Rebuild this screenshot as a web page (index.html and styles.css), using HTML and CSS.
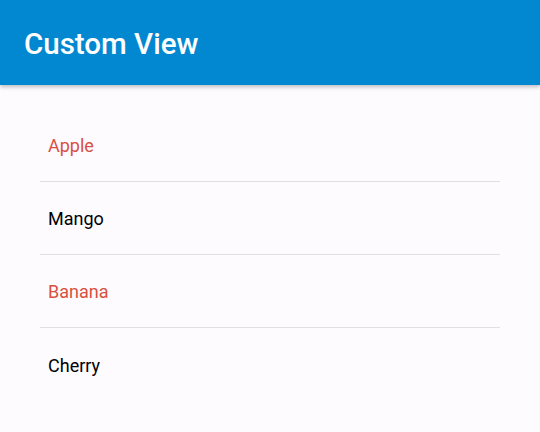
FILE: index.html
```html
<!DOCTYPE html>
<html>
<head>
<meta charset="utf-8">
<link rel="stylesheet" href="styles.css">
</head>
<body>
<header class="appbar"><h1 class="title">Custom View</h1></header>
<main class="content">
  <ul class="list">
    <li class="item red">Apple</li>
    <li class="item">Mango</li>
    <li class="item red">Banana</li>
    <li class="item">Cherry</li>
  </ul>
</main>
</body>
</html>
```
FILE: styles.css
```css
html, body {
  margin: 0;
  padding: 0;
  height: 100%;
  background: #fefbff;
  font-family: Roboto, "Liberation Sans", sans-serif;
}
.appbar {
  height: 85px;
  background: #0288d1;
  display: flex;
  align-items: center;
  padding: 2px 24px 0;
  box-sizing: border-box;
  box-shadow: 0 2px 4px rgba(0,0,0,0.25);
  position: relative;
}
.title {
  margin: 0;
  color: #fff;
  font-size: 29.5px;
  font-weight: 500;
  letter-spacing: 0;
}
.content {
  padding: 24px 40px 0;
}
.list {
  list-style: none;
  margin: 0;
  padding: 0;
}
.item {
  height: 73px;
  display: flex;
  align-items: center;
  padding: 1px 8px 0;
  box-sizing: border-box;
  font-size: 18px;
  color: #000;
  border-bottom: 1px solid #e2dfe3;
}
.item:last-child {
  border-bottom: none;
}
.item.red {
  color: #d9503f;
}
```
